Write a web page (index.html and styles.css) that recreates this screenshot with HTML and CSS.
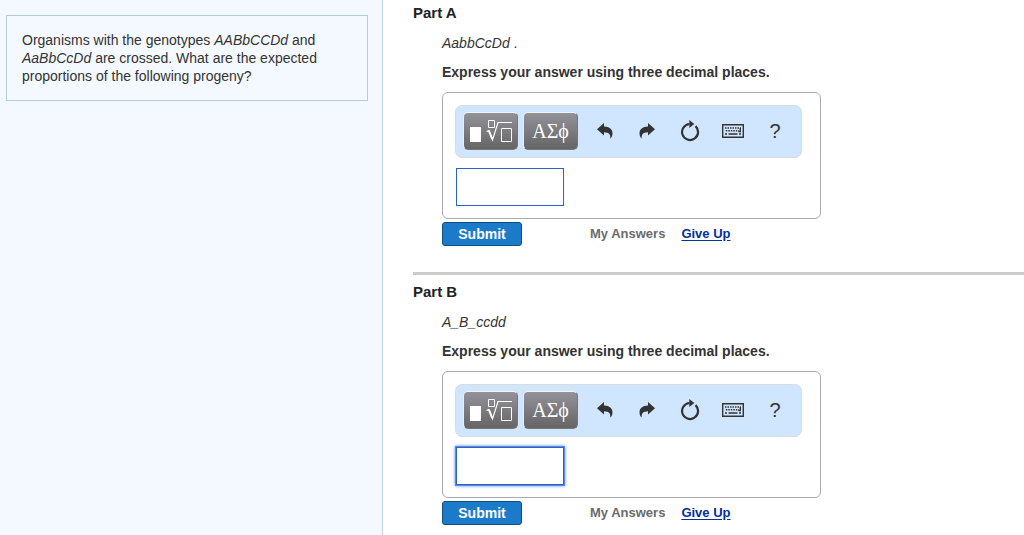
FILE: index.html
```html
<!DOCTYPE html>
<html lang="en">
<head>
<meta charset="utf-8">
<meta name="viewport" content="width=device-width, initial-scale=1">
<title>Genotype proportions</title>
<link rel="stylesheet" href="styles.css">
</head>
<body>
<svg class="sprite" aria-hidden="true">
  <symbol id="i-root" viewBox="0 0 44 26">
    <path fill="#fff" d="M1 9h11v15H1z"/>
    <path fill="none" stroke="#fff" d="M19.500 2.500h6v7h-6zM32.500 10.500h10v13h-10z"/>
    <path fill="none" stroke="#fff" stroke-width="1.200" d="M17.500 13.500l2.500-1 3.500 9.500L29 4.500H43"/>
    <path fill="none" stroke="#fff" stroke-width="2" d="M20 13l3.200 8"/>
  </symbol>
  <symbol id="i-undo" viewBox="0 0 16 16">
    <path d="M0 6.300L7 0v3.500c5.500.2 8.500 2.800 8.500 6.700 0 2.400-.9 4.300-2.300 5.300.7-3.700-1-6-6.200-6.200v3.300z"/>
  </symbol>
  <symbol id="i-redo" viewBox="0 0 16 16">
    <path d="M16 6.300L9 0v3.500C3.500 3.700.5 6.300.5 10.200c0 2.400.9 4.300 2.300 5.300-.7-3.700 1-6 6.200-6.200v3.300z"/>
  </symbol>
  <symbol id="i-reset" viewBox="0 0 20 22">
    <path fill="none" stroke="currentColor" stroke-width="2.200" d="M15.500 6.100A8 8 0 1 1 9.500 4"/>
    <path d="M9.300 0L14.300 4.100 9.300 8z"/>
  </symbol>
  <symbol id="i-keyboard" viewBox="0 0 22 14">
    <path fill="none" stroke="currentColor" stroke-width="1.400" d="M.7.700h20.600v12.600H.7z"/>
    <path fill="none" stroke="currentColor" stroke-width="1.400" stroke-dasharray="1.500 1" d="M3 4h16M3.800 6.800h13"/>
    <path fill="none" stroke="currentColor" stroke-width="1.400" d="M3 10h2M6.500 10h9M17 10h2M18.300 4v3.500h-2"/>
  </symbol>
</svg>
<div class="page">
  <aside class="sidebar">
    <p class="question">Organisms with the genotypes <i>AABbCCDd</i> and <i>AaBbCcDd</i> are crossed. What are the expected proportions of the following progeny?</p>
  </aside>
  <main class="parts">
    <section class="part">
      <h2 class="part-title">Part A</h2>
      <form class="part-body">
        <p class="genotype"><i>AabbCcDd</i> .</p>
        <label class="instruction" for="answer-a">Express your answer using three decimal places.</label>
        <div class="answer-box">
          <div class="toolbar">
            <div class="palettes">
              <button class="palette" type="button" aria-label="Templates"><svg class="root-icon"><use href="#i-root"/></svg></button>
              <button class="palette" type="button">ΑΣϕ</button>
            </div>
            <button class="tool" type="button" aria-label="Undo"><svg class="arrow-icon"><use href="#i-undo"/></svg></button>
            <button class="tool" type="button" aria-label="Redo"><svg class="arrow-icon"><use href="#i-redo"/></svg></button>
            <button class="tool" type="button" aria-label="Reset"><svg class="reset-icon"><use href="#i-reset"/></svg></button>
            <button class="tool" type="button" aria-label="Keyboard shortcuts"><svg class="keyboard-icon"><use href="#i-keyboard"/></svg></button>
            <button class="tool" type="button">?</button>
          </div>
          <input class="answer" id="answer-a" type="text">
        </div>
        <div class="actions">
          <button class="submit" type="button">Submit</button>
          <span class="my-answers">My Answers</span>
          <a class="give-up" href="#">Give Up</a>
        </div>
      </form>
    </section>
    <section class="part">
      <h2 class="part-title">Part B</h2>
      <form class="part-body">
        <p class="genotype"><i>A_B_ccdd</i></p>
        <label class="instruction" for="answer-b">Express your answer using three decimal places.</label>
        <div class="answer-box">
          <div class="toolbar">
            <div class="palettes">
              <button class="palette" type="button" aria-label="Templates"><svg class="root-icon"><use href="#i-root"/></svg></button>
              <button class="palette" type="button">ΑΣϕ</button>
            </div>
            <button class="tool" type="button" aria-label="Undo"><svg class="arrow-icon"><use href="#i-undo"/></svg></button>
            <button class="tool" type="button" aria-label="Redo"><svg class="arrow-icon"><use href="#i-redo"/></svg></button>
            <button class="tool" type="button" aria-label="Reset"><svg class="reset-icon"><use href="#i-reset"/></svg></button>
            <button class="tool" type="button" aria-label="Keyboard shortcuts"><svg class="keyboard-icon"><use href="#i-keyboard"/></svg></button>
            <button class="tool" type="button">?</button>
          </div>
          <input class="answer active" id="answer-b" type="text">
        </div>
        <div class="actions">
          <button class="submit" type="button">Submit</button>
          <span class="my-answers">My Answers</span>
          <a class="give-up" href="#">Give Up</a>
        </div>
      </form>
    </section>
  </main>
</div>
</body>
</html>
```
FILE: styles.css
```css
* {
  box-sizing: border-box;
}

body {
  margin: 0;
  background: #fff;
  color: #333;
  font: 14px/18px "Liberation Sans", Arial, sans-serif;
}

button {
  padding: 0;
  border: 0;
  font: inherit;
}

svg {
  display: block;
  fill: currentColor;
}

.sprite {
  display: none;
}

.page {
  display: grid;
  grid-template-columns: 383px 1fr;
  min-height: 100vh;
}

.sidebar {
  padding: 15px 14px 0 6px;
  border-right: 1px solid #bccfe2;
  background: #f4f9ff;
}

.question {
  margin: 0;
  padding: 15px;
  border: 1px solid #b7cbe0;
}

.parts {
  padding-left: 30px;
}

.part {
  padding-top: 4px;
}

.part + .part {
  margin-top: 26px;
  padding-top: 8px;
  border-top: 3px solid #ccc;
}

.part-title {
  margin: 0 0 12px;
  color: #222;
  font-size: 15px;
  line-height: 18px;
}

.part-body {
  padding-left: 29px;
}

.genotype {
  margin: 0 0 11px;
}

.instruction {
  display: block;
  margin-bottom: 11px;
  font-weight: bold;
}

.answer-box {
  max-width: 379px;
  padding: 12px 18px 12px 12px;
  border: 1px solid #aaa;
  border-radius: 6px;
}

.toolbar {
  display: flex;
  align-items: center;
  gap: 5px;
  height: 53px;
  margin-bottom: 10px;
  padding: 0 7px 2px;
  border: 1px solid #d9dde2;
  border-radius: 7px;
  background: #d0e5fe;
}

.palettes {
  display: flex;
  gap: 5px;
  margin-right: 3px;
}

.palette {
  display: grid;
  place-items: center;
  width: 55px;
  height: 38px;
  border: 1px solid #777;
  border-top-color: #f4f4f4;
  border-left-color: #eee;
  border-radius: 5px;
  background: linear-gradient(#93929a, #656565);
  color: #fff;
  font-family: "Liberation Serif", "Times New Roman", serif;
  font-size: 20px;
}

.root-icon {
  width: 44px;
  height: 26px;
}

.tool {
  display: grid;
  place-items: center;
  width: 38px;
  height: 38px;
  background: none;
  color: #333;
  font-size: 20px;
}

.arrow-icon {
  width: 16px;
  height: 16px;
}

.reset-icon {
  width: 20px;
  height: 22px;
}

.keyboard-icon {
  width: 22px;
  height: 14px;
}

.answer {
  display: block;
  width: 108px;
  height: 38px;
  margin-left: 1px;
  border: 1px solid #2962c9;
  background: #fff;
  font: inherit;
}

.answer.active {
  outline: 1px solid #5d8be0;
  box-shadow: 0 0 3px 1px #5d8be0;
}

.actions {
  display: flex;
  align-items: center;
  margin-top: 3px;
  font-size: 13px;
  font-weight: bold;
}

.submit {
  width: 80px;
  height: 24px;
  margin-right: 68px;
  border: 1px solid #0d4f85;
  border-radius: 3px;
  background: #1c7bc9;
  color: #fff;
  font-size: 14px;
}

.my-answers {
  margin-right: 16px;
  color: #6b6b6b;
}

.give-up {
  color: #03309b;
  text-underline-offset: 2px;
}
```
